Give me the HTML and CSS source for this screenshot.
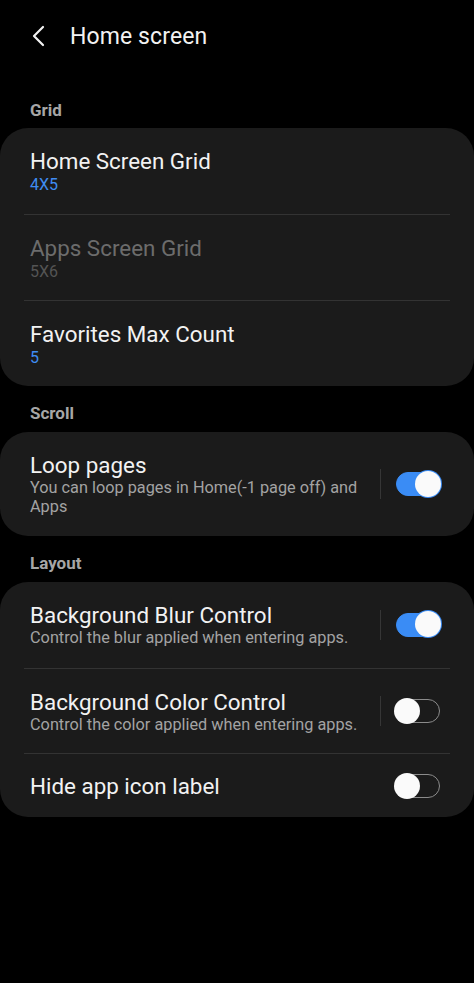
FILE: index.html
```html
<!DOCTYPE html>
<html lang="en">
<head>
	<meta charset="UTF-8">
	<title>Home screen</title>
	<link rel="stylesheet" href="styles.css">
</head>
<body>
	<div class="appbar">
		<a class="back" href="javascript:;">
			<svg width="16" height="22" viewBox="0 0 16 22"><path d="M12 2 L3 11 L12 20" fill="none" stroke="#f2f2f2" stroke-width="2.2" stroke-linecap="round" stroke-linejoin="round"/></svg>
		</a>
		<h1 class="title">Home screen</h1>
	</div>

	<div class="section">Grid</div>
	<div class="card">
		<div class="row">
			<div class="text">
				<div class="name">Home Screen Grid</div>
				<div class="value">4X5</div>
			</div>
		</div>
		<div class="row disabled">
			<div class="text">
				<div class="name">Apps Screen Grid</div>
				<div class="value">5X6</div>
			</div>
		</div>
		<div class="row">
			<div class="text">
				<div class="name">Favorites Max Count</div>
				<div class="value">5</div>
			</div>
		</div>
	</div>

	<div class="section">Scroll</div>
	<div class="card">
		<div class="row">
			<div class="text">
				<div class="name">Loop pages</div>
				<div class="desc">You can loop pages in Home(-1 page off) and Apps</div>
			</div>
			<span class="sep"></span>
			<span class="switch on"><i></i></span>
		</div>
	</div>

	<div class="section">Layout</div>
	<div class="card">
		<div class="row">
			<div class="text">
				<div class="name">Background Blur Control</div>
				<div class="desc">Control the blur applied when entering apps.</div>
			</div>
			<span class="sep"></span>
			<span class="switch on"><i></i></span>
		</div>
		<div class="row">
			<div class="text">
				<div class="name">Background Color Control</div>
				<div class="desc">Control the color applied when entering apps.</div>
			</div>
			<span class="sep"></span>
			<span class="switch"><i></i></span>
		</div>
		<div class="row single">
			<div class="text">
				<div class="name">Hide app icon label</div>
			</div>
			<span class="switch"><i></i></span>
		</div>
	</div>
</body>
</html>
```

FILE: styles.css
```css
body {
	margin: 0;
	background: #000;
	font-family: Roboto, "Noto Sans", sans-serif;
	color: #f2f2f2;
}
.appbar {
	display: flex;
	align-items: center;
	height: 72px;
	padding: 0 0 0 31px;
}
.back {
	display: flex;
	width: 16px;
	height: 22px;
}
.title {
	margin: 0 0 0 23px;
	font-size: 23px;
	font-weight: 400;
	letter-spacing: 0.1px;
}
.section {
	padding: 28px 30px 8px;
	font-size: 17px;
	line-height: 20px;
	font-weight: 700;
	color: #a6a6a6;
}
.card + .section {
	padding-top: 17px;
	padding-bottom: 9px;
}
.card {
	background: #1b1b1b;
	border-radius: 28px;
	padding: 0 0 0 30px;
}
.row {
	display: flex;
	align-items: center;
	padding: 20px 34px 20px 0;
}
.row + .row {
	border-top: 1px solid #333;
	margin-left: -6px;
	padding-left: 6px;
	margin-right: 24px;
	padding-right: 10px;
	padding-bottom: 19px;
}
.row.single {
	padding-top: 19px;
	padding-bottom: 18px;
}
.text {
	flex: 1;
}
.name {
	font-size: 22.4px;
	line-height: 26px;
	color: #f2f2f2;
}
.value {
	margin-top: 2px;
	font-size: 16px;
	line-height: 18px;
	color: #3f8cf2;
}
.desc {
	margin-top: 1px;
	font-size: 16.3px;
	line-height: 18.5px;
	color: #a3a3a3;
}
.disabled .name {
	color: #6c6c6c;
}
.disabled .value {
	color: #545454;
}
.sep {
	width: 1px;
	height: 30px;
	background: #363636;
	margin: 0 15px 0 10px;
}
.switch {
	position: relative;
	width: 44px;
	height: 24px;
	box-sizing: border-box;
	border: 1.5px solid #8c8c8c;
	border-radius: 12px;
	background: #1b1b1b;
	flex: none;
}
.switch i {
	position: absolute;
	left: -3px;
	top: -2.5px;
	width: 26px;
	height: 26px;
	border-radius: 50%;
	background: #fafafa;
}
.switch.on {
	border-color: #3a8cf5;
	background: #3a8cf5;
}
.switch.on i {
	left: auto;
	right: -1.5px;
	box-shadow: 0 0 0 1px #3a8cf5;
}
```
